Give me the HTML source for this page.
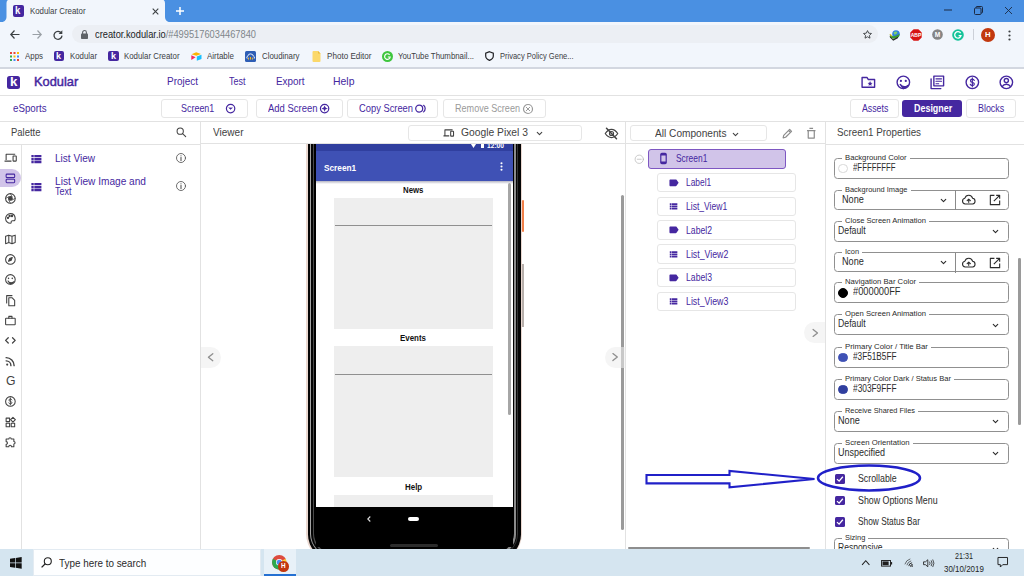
<!DOCTYPE html>
<html lang="en">
<head>
<meta charset="utf-8">
<title>Kodular Creator</title>
<style>
*{box-sizing:border-box;margin:0;padding:0}
html,body{width:1024px;height:576px;overflow:hidden;background:#fff}
body{position:relative;font-family:"Liberation Sans",sans-serif;color:#333;font-size:11px}
.a{position:absolute}
.t{position:absolute;white-space:nowrap;line-height:1;transform-origin:0 0}
svg{position:absolute;overflow:visible}
.btn{position:absolute;border:1px solid #e6e6e6;border-radius:3px;background:#fff}
.fs{position:absolute;border:1px solid #909090;border-radius:3.5px}
.lgbg{position:absolute;background:#fff;height:3px}
</style>
</head>
<body>
<div class="a" style="left:0px;top:0px;width:1024px;height:22px;background:#4a90e2;"></div>
<div class="a" style="left:0px;top:22px;width:1024px;height:46px;background:#f2f6fc;"></div>
<svg style="left:0px;top:0px" width="172" height="23" viewBox="0 0 172 23"><path d="M0 22.500C4 22.500 6.500 20 6.500 17V3Q6.500 -0.500 10 -0.500H161.500Q165 -0.500 165 3V17C165 20 167.500 22.500 171.500 22.500V23H0Z" fill="#f2f6fc"/></svg>
<div class="a" style="left:72px;top:25px;width:806px;height:18px;background:#eceff4;border-radius:9px"></div>
<div class="a" style="left:0px;top:67px;width:1024px;height:1.5px;background:#d3d7e0;"></div>
<div class="a" style="left:12.5px;top:5px;width:11.5px;height:11.5px;background:#4527a0;border-radius:2px"></div>
<div class="t" style="left:15.20px;top:5.41px;font-size:10.5px;color:#fff;transform:scaleX(0.9076);font-weight:bold;">k</div>
<div class="t" style="left:29.50px;top:6.98px;font-size:9px;color:#3c4043;transform:scaleX(0.8736);">Kodular Creator</div>
<svg style="left:151.5px;top:7.5px" width="7" height="7" viewBox="0 0 7 7"><path d="M0.7 0.7L6.3 6.3M6.3 0.7L0.7 6.3" stroke="#3c4043" stroke-width="1.1" fill="none"/></svg>
<svg style="left:176px;top:7px" width="8" height="8" viewBox="0 0 8 8"><path d="M4 0V8M0 4H8" stroke="#fff" stroke-width="1.5" fill="none"/></svg>
<svg style="left:944px;top:9px" width="8" height="2" viewBox="0 0 8 2"><path d="M0 1H8" stroke="#1b2a44" stroke-width="1"/></svg>
<svg style="left:973.5px;top:6px" width="9" height="9" viewBox="0 0 9 9"><rect x="0.5" y="2" width="6.5" height="6.5" rx="1" fill="none" stroke="#1b2a44" stroke-width="1"/><path d="M2 2V1.5Q2 0.5 3 0.5H7.5Q8.5 0.5 8.5 1.5V6Q8.5 7 7.5 7H7" fill="none" stroke="#1b2a44" stroke-width="1"/></svg>
<svg style="left:1005px;top:6.5px" width="7" height="7" viewBox="0 0 7 7"><path d="M0 0L7 7M7 0L0 7" stroke="#1b2a44" stroke-width="0.9" fill="none"/></svg>
<svg style="left:9.5px;top:30px" width="10" height="9" viewBox="0 0 10 9"><path d="M4.5 0.5L0.8 4.5L4.5 8.5M0.8 4.5H9.5" stroke="#3c4043" stroke-width="1.2" fill="none"/></svg>
<svg style="left:31.5px;top:30px" width="10" height="9" viewBox="0 0 10 9"><path d="M5.5 0.5L9.2 4.5L5.5 8.5M9.2 4.5H0.5" stroke="#9aa0a6" stroke-width="1.2" fill="none"/></svg>
<svg style="left:52.5px;top:29.5px" width="10" height="10" viewBox="0 0 10 10"><path d="M8.3 3A4 4 0 1 0 9 5.6" stroke="#3c4043" stroke-width="1.3" fill="none"/><path d="M9.3 0.3V4H5.6Z" fill="#3c4043"/></svg>
<svg style="left:80.5px;top:30px" width="7" height="9" viewBox="0 0 7 9"><rect x="0" y="3.6" width="7" height="5.4" rx="0.8" fill="#5f6368"/><path d="M1.6 4V2.4a1.9 1.9 0 0 1 3.8 0V4" stroke="#5f6368" stroke-width="1.1" fill="none"/></svg>
<div class="t" style="left:94.5px;top:29.11px;font-size:10.5px;color:#202124;transform:scaleX(0.8839)">creator.kodular.io<span style="color:#80868b">/#4995176034467840</span></div>
<svg style="left:862px;top:29px" width="11" height="11" viewBox="0 0 24 24"><path d="M12 3.5l2.6 5.6 6.1.7-4.5 4.2 1.2 6-5.4-3-5.4 3 1.2-6L3.3 9.8l6.1-.7z" fill="none" stroke="#3c4043" stroke-width="2" stroke-linejoin="round"/></svg>
<svg style="left:888.5px;top:28.5px" width="12" height="12" viewBox="0 0 12 12"><circle cx="7" cy="5" r="3.800" fill="#2f7fe0"/><path d="M4.500 3.500Q6.500 1.800 8.500 3Q8 5.500 5.500 5.800Z" fill="#7ed06a"/><path d="M0.800 5.200Q3.500 9.500 10.800 4.800L9.800 7.800Q4.500 11.500 1.200 8.200Z" fill="#3c9a2e"/><path d="M0.600 6.800L4 10.200L9.500 7.500L8.800 9.300L4.200 11.800L1 8.600Z" fill="#2a2a2a"/><path d="M1 5.200L2.800 7.200" stroke="#e8c030" stroke-width="1.200"/></svg>
<svg style="left:909.5px;top:28.5px" width="12" height="12" viewBox="0 0 12 12"><path d="M3.6 0.3H8.4L11.7 3.6V8.4L8.4 11.7H3.6L0.3 8.4V3.6Z" fill="#d61414"/><text x="6" y="7.9" font-family="Liberation Sans,sans-serif" font-size="5" font-weight="bold" fill="#fff" text-anchor="middle">ABP</text></svg>
<svg style="left:931.5px;top:29px" width="11" height="11" viewBox="0 0 12 12"><circle cx="6" cy="6" r="5.800" fill="#858585"/><text x="6" y="8.500" font-family="Liberation Sans,sans-serif" font-size="7.200" font-weight="bold" fill="#fff" text-anchor="middle">M</text></svg>
<svg style="left:952px;top:28.5px" width="12" height="12" viewBox="0 0 12 12"><circle cx="6" cy="6" r="5.8" fill="#15c39a"/><path d="M8.6 4.2A3.2 3.2 0 1 0 9 6.6H6.6" stroke="#fff" stroke-width="1.3" fill="none"/></svg>
<div class="a" style="left:972.5px;top:29px;width:1px;height:11px;background:#ccd0d8;"></div>
<div class="a" style="left:981px;top:27.5px;width:14px;height:14px;background:#c2380f;border-radius:7px"></div>
<div class="t" style="left:985.20px;top:30.63px;font-size:8px;color:#fff;transform:scaleX(0.9693);font-weight:bold;">H</div>
<svg style="left:1008px;top:29.5px" width="3" height="11" viewBox="0 0 3 11"><circle cx="1.5" cy="1.5" r="1.1" fill="#3c4043"/><circle cx="1.5" cy="5.5" r="1.1" fill="#3c4043"/><circle cx="1.5" cy="9.5" r="1.1" fill="#3c4043"/></svg>
<svg style="left:10px;top:51.5px" width="9" height="9" viewBox="0 0 9 9"><rect x="0" y="0" width="2" height="2" fill="#ea4335"/><rect x="3.5" y="0" width="2" height="2" fill="#ea4335"/><rect x="7" y="0" width="2" height="2" fill="#fbbc04"/><rect x="0" y="3.5" width="2" height="2" fill="#34a853"/><rect x="3.5" y="3.5" width="2" height="2" fill="#fbbc04"/><rect x="7" y="3.5" width="2" height="2" fill="#4285f4"/><rect x="0" y="7" width="2" height="2" fill="#34a853"/><rect x="3.5" y="7" width="2" height="2" fill="#4285f4"/><rect x="7" y="7" width="2" height="2" fill="#ea4335"/></svg>
<div class="t" style="left:25.00px;top:51.98px;font-size:9px;color:#3c4043;transform:scaleX(0.8775);">Apps</div>
<div class="a" style="left:53.5px;top:50.5px;width:10.5px;height:10.5px;background:#4527a0;border-radius:2px"></div>
<div class="t" style="left:56.00px;top:51.26px;font-size:9.5px;color:#fff;transform:scaleX(0.9463);font-weight:bold;">k</div>
<div class="t" style="left:70.00px;top:51.98px;font-size:9px;color:#3c4043;transform:scaleX(0.8704);">Kodular</div>
<div class="a" style="left:108px;top:50.5px;width:10.5px;height:10.5px;background:#4527a0;border-radius:2px"></div>
<div class="t" style="left:110.50px;top:51.26px;font-size:9.5px;color:#fff;transform:scaleX(0.9463);font-weight:bold;">k</div>
<div class="t" style="left:124.00px;top:51.98px;font-size:9px;color:#3c4043;transform:scaleX(0.8736);">Kodular Creator</div>
<svg style="left:191px;top:51.5px" width="11" height="9" viewBox="0 0 11 9"><path d="M0.5 2.2L5.2 0.3L10 2L5.3 3.8Z" fill="#fcb400"/><path d="M5.8 4.6L10.5 2.8V7L5.8 8.8Z" fill="#18bfff"/><path d="M0.3 3.2L4.6 5.2L0.3 8Z" fill="#f82b60"/></svg>
<div class="t" style="left:207.00px;top:51.98px;font-size:9px;color:#3c4043;transform:scaleX(0.8848);">Airtable</div>
<svg style="left:245px;top:50.5px" width="11" height="11" viewBox="0 0 11 11"><rect width="11" height="11" rx="1.500" fill="#2d5db5"/><path d="M2.200 7.600Q1 5.800 2.800 5Q3.300 2.700 5.700 2.900Q8 3.100 8.300 5Q10 5.400 9.200 7.600" fill="none" stroke="#fff" stroke-width="0.900"/><path d="M3.600 8.600V6.600M5.500 8.600V6M7.400 8.600V6.600" stroke="#f5b324" stroke-width="1"/></svg>
<div class="t" style="left:261.50px;top:51.98px;font-size:9px;color:#3c4043;transform:scaleX(0.8716);">Cloudinary</div>
<svg style="left:312px;top:50.5px" width="9" height="11" viewBox="0 0 9 11"><path d="M0.5 1Q0.5 0 1.5 0H6L8.5 2.5V10Q8.5 11 7.5 11H1.5Q0.5 11 0.5 10Z" fill="#fbd86a"/><path d="M6 0V2.5H8.5Z" fill="#e9b93a"/></svg>
<div class="t" style="left:326.50px;top:51.98px;font-size:9px;color:#3c4043;transform:scaleX(0.8984);">Photo Editor</div>
<svg style="left:381.5px;top:50.5px" width="11" height="11" viewBox="0 0 11 11"><circle cx="5.5" cy="5.5" r="5.5" fill="#3ec63e"/><path d="M7.6 3.8A2.8 2.8 0 1 0 8.2 6H5.8" stroke="#fff" stroke-width="1.2" fill="none"/></svg>
<div class="t" style="left:398.00px;top:51.98px;font-size:9px;color:#3c4043;transform:scaleX(0.8713);">YouTube Thumbnail...</div>
<svg style="left:485px;top:51px" width="9" height="10" viewBox="0 0 9 10"><path d="M4.5 0.7L8.3 2.2V5Q8.3 7.8 4.5 9.4Q0.7 7.8 0.7 5V2.2Z" fill="none" stroke="#202124" stroke-width="1.2"/></svg>
<div class="t" style="left:500.00px;top:51.98px;font-size:9px;color:#3c4043;transform:scaleX(0.8349);">Privacy Policy Gene...</div>
<div class="a" style="left:0px;top:95px;width:1024px;height:1px;background:#e2e2e2;"></div>
<div class="a" style="left:0px;top:121px;width:1024px;height:1px;background:#e2e2e2;"></div>
<div class="a" style="left:7px;top:76px;width:13px;height:13px;background:#4527a0;border-radius:2.5px"></div>
<div class="t" style="left:9.60px;top:76.22px;font-size:12.5px;color:#fff;transform:scaleX(1.0644);font-weight:bold;">k</div>
<div class="t" style="left:33.70px;top:76.06px;font-size:12.8px;color:#4527a0;transform:scaleX(1.0041);-webkit-text-stroke:0.45px #4527a0;">Kodular</div>
<div class="t" style="left:167.00px;top:76.31px;font-size:10.5px;color:#4527a0;transform:scaleX(0.9486);">Project</div>
<div class="t" style="left:229.00px;top:76.31px;font-size:10.5px;color:#4527a0;transform:scaleX(0.8568);">Test</div>
<div class="t" style="left:276.00px;top:76.31px;font-size:10.5px;color:#4527a0;transform:scaleX(0.9391);">Export</div>
<div class="t" style="left:332.50px;top:76.31px;font-size:10.5px;color:#4527a0;transform:scaleX(0.9956);">Help</div>
<svg style="left:859.65px;top:73.65px" width="16.7" height="16.7" viewBox="0 0 24 24"><g fill="none" stroke="#4527a0" stroke-width="2" stroke-linejoin="round" stroke-linecap="round"><path d="M3 6V19H21V8H12L10 5H3Z" stroke-linecap="butt"/><path d="M14.5 10.2l1.1 2.3 2.5.3-1.9 1.700.5 2.500-2.200-1.300-2.200 1.300.5-2.500-1.900-1.700 2.500-.3z" fill="#4527a0" stroke="none"/></g></svg>
<svg style="left:894.65px;top:73.65px" width="16.7" height="16.7" viewBox="0 0 24 24"><g fill="none" stroke="#4527a0" stroke-width="2" stroke-linejoin="round" stroke-linecap="round"><circle cx="12" cy="12" r="9"/><circle cx="8.500" cy="10" r="1.600" fill="#4527a0" stroke="none"/><circle cx="15.500" cy="10" r="1.600" fill="#4527a0" stroke="none"/><path d="M7.500 15Q12 21 18.500 16.500Q14 20.500 12 20.800Z" fill="#4527a0"/></g></svg>
<svg style="left:929.15px;top:73.65px" width="16.7" height="16.7" viewBox="0 0 24 24"><g fill="none" stroke="#4527a0" stroke-width="2" stroke-linejoin="round" stroke-linecap="round"><path d="M7 3H21V17H7Z"/><path d="M3 7V21H17"/><path d="M10 7H18M10 10.500H18M10 14H14" stroke-width="1.600"/></g></svg>
<svg style="left:963.65px;top:73.65px" width="16.7" height="16.7" viewBox="0 0 24 24"><g fill="none" stroke="#4527a0" stroke-width="2" stroke-linejoin="round" stroke-linecap="round"><circle cx="12" cy="12" r="9"/><path d="M14.800 9.200Q14 7.500 12 7.500Q9.300 7.500 9.300 9.600Q9.300 11.300 12 12Q14.900 12.700 14.900 14.500Q14.900 16.600 12 16.600Q9.700 16.600 9 14.800M12 5.500V18.500" stroke-width="1.700"/></g></svg>
<svg style="left:998.35px;top:73.65px" width="16.7" height="16.7" viewBox="0 0 24 24"><g fill="none" stroke="#4527a0" stroke-width="2" stroke-linejoin="round" stroke-linecap="round"><circle cx="12" cy="12" r="9"/><circle cx="12" cy="9.500" r="3"/><path d="M6 18Q8 14.800 12 14.800Q16 14.800 18 18"/></g></svg>
<div class="t" style="left:12.50px;top:102.71px;font-size:10.5px;color:#4527a0;transform:scaleX(0.9258);">eSports</div>
<div class="btn" style="left:160.50px;top:99.2px;width:87.50px;height:18.4px;"></div>
<div class="btn" style="left:255.50px;top:99.2px;width:87.00px;height:18.4px;"></div>
<div class="btn" style="left:347.00px;top:99.2px;width:91.00px;height:18.4px;"></div>
<div class="btn" style="left:443.25px;top:99.2px;width:102.25px;height:18.4px;"></div>
<div class="t" style="left:180.70px;top:102.81px;font-size:10.5px;color:#4527a0;transform:scaleX(0.8515);">Screen1</div>
<svg style="left:225.1px;top:103.10000000000001px" width="11.2" height="11.2" viewBox="0 0 24 24"><g fill="none" stroke="#4527a0" stroke-width="2.6" stroke-linejoin="round" stroke-linecap="round"><circle cx="12" cy="12" r="9"/><path d="M8.500 10.500L12 14L15.500 10.500Z" fill="#4527a0" stroke-width="1"/></g></svg>
<div class="t" style="left:267.50px;top:102.81px;font-size:10.5px;color:#4527a0;transform:scaleX(0.9021);">Add Screen</div>
<svg style="left:319.4px;top:103.10000000000001px" width="11.2" height="11.2" viewBox="0 0 24 24"><g fill="none" stroke="#4527a0" stroke-width="2.6" stroke-linejoin="round" stroke-linecap="round"><circle cx="12" cy="12" r="9"/><path d="M12 7V17M7 12H17" stroke-width="2"/><circle cx="12" cy="12" r="3.200" fill="#4527a0" stroke="none"/></g></svg>
<div class="t" style="left:359.00px;top:102.81px;font-size:10.5px;color:#4527a0;transform:scaleX(0.8896);">Copy Screen</div>
<svg style="left:414.9px;top:103.10000000000001px" width="11.2" height="11.2" viewBox="0 0 24 24"><g fill="none" stroke="#4527a0" stroke-width="2.6" stroke-linejoin="round" stroke-linecap="round"><circle cx="9" cy="12" r="7.500"/><path d="M18.500 5A9 9 0 0 1 18.500 19"/></g></svg>
<div class="t" style="left:455.00px;top:102.81px;font-size:10.5px;color:#9a9a9a;transform:scaleX(0.8634);">Remove Screen</div>
<svg style="left:521.7px;top:102.7px" width="12" height="12" viewBox="0 0 24 24"><g fill="none" stroke="#9a9a9a" stroke-width="2.4" stroke-linejoin="round" stroke-linecap="round"><circle cx="12" cy="12" r="9"/><path d="M8.500 8.500L15.500 15.500M15.500 8.500L8.500 15.500" stroke-width="2"/></g></svg>
<div class="btn" style="left:850.00px;top:99.2px;width:49.00px;height:18.4px;"></div>
<div class="btn" style="left:965.50px;top:99.2px;width:50.00px;height:18.4px;"></div>
<div class="a" style="left:902.3px;top:99.7px;width:59.5px;height:17.3px;background:#4527a0;border-radius:3px"></div>
<div class="t" style="left:861.70px;top:102.61px;font-size:10.5px;color:#4527a0;transform:scaleX(0.8346);">Assets</div>
<div class="t" style="left:913.50px;top:102.61px;font-size:10.5px;color:#fff;transform:scaleX(0.8502);font-weight:bold;">Designer</div>
<div class="t" style="left:977.50px;top:102.61px;font-size:10.5px;color:#4527a0;transform:scaleX(0.8472);">Blocks</div>
<div class="a" style="left:0px;top:143.8px;width:200px;height:1px;background:#e2e2e2;"></div>
<div class="a" style="left:200px;top:142.6px;width:425px;height:1px;background:#e2e2e2;"></div>
<div class="a" style="left:625px;top:143.2px;width:200px;height:1px;background:#e2e2e2;"></div>
<div class="a" style="left:825px;top:143.6px;width:199px;height:1px;background:#e2e2e2;"></div>
<div class="a" style="left:200px;top:122px;width:1px;height:427px;background:#e2e2e2;"></div>
<div class="a" style="left:625px;top:122px;width:1px;height:427px;background:#e2e2e2;"></div>
<div class="a" style="left:825.3px;top:122px;width:1px;height:427px;background:#e2e2e2;"></div>
<div class="t" style="left:10.50px;top:127.31px;font-size:10.5px;color:#424242;transform:scaleX(0.9024);">Palette</div>
<svg style="left:175.45px;top:126.44999999999999px" width="12.5" height="12.5" viewBox="0 0 24 24"><g fill="none" stroke="#424242" stroke-width="2" stroke-linejoin="round" stroke-linecap="round"><circle cx="10" cy="10" r="6"/><path d="M14.500 14.500L20.500 20.500" /></g></svg>
<div class="t" style="left:212.50px;top:126.91px;font-size:10.5px;color:#424242;transform:scaleX(0.9560);">Viewer</div>
<div class="btn" style="left:407.50px;top:124.5px;width:174.00px;height:16px;"></div>
<div class="t" style="left:461.00px;top:126.83px;font-size:11.3px;color:#424242;transform:scaleX(0.9116);">Google Pixel 3</div>
<svg style="left:443.25px;top:127.44999999999999px" width="11.5" height="11.5" viewBox="0 0 24 24"><g fill="none" stroke="#424242" stroke-width="2.2" stroke-linejoin="round" stroke-linecap="round"><path d="M4 17V6H20M1 18.500H13" stroke-linecap="butt"/><rect x="16" y="9" width="6" height="10" rx="0.800"/></g></svg>
<svg style="left:535.0px;top:128.8px" width="9" height="9" viewBox="0 0 24 24"><g fill="none" stroke="#424242" stroke-width="2.9" stroke-linejoin="round" stroke-linecap="round"><path d="M6 9L12 15L18 9" /></g></svg>
<svg style="left:604.2px;top:125.5px" width="15" height="15" viewBox="0 0 24 24"><g fill="none" stroke="#424242" stroke-width="1.9" stroke-linejoin="round" stroke-linecap="round"><path d="M2 12Q6.500 5.500 12 5.500Q17.500 5.500 22 12Q17.500 18.500 12 18.500Q6.500 18.500 2 12Z"/><circle cx="12" cy="12" r="3.200"/><path d="M4 3.500L20 20.500" stroke-width="2.400"/></g></svg>
<div class="btn" style="left:629.50px;top:125.2px;width:137.00px;height:16.3px;"></div>
<div class="t" style="left:654.50px;top:128.03px;font-size:11.3px;color:#424242;transform:scaleX(0.8963);">All Components</div>
<svg style="left:731.0px;top:129.8px" width="9" height="9" viewBox="0 0 24 24"><g fill="none" stroke="#424242" stroke-width="2.9" stroke-linejoin="round" stroke-linecap="round"><path d="M6 9L12 15L18 9" /></g></svg>
<svg style="left:780.5px;top:126.5px" width="13" height="13" viewBox="0 0 24 24"><g fill="none" stroke="#8c8c8c" stroke-width="2.2" stroke-linejoin="round" stroke-linecap="round"><path d="M4 20L5 15.500L16 4.500L19.500 8L8.500 19Z M14 6.500L17.500 10" /></g></svg>
<svg style="left:803.75px;top:125.94999999999999px" width="14.5" height="14.5" viewBox="0 0 24 24"><g fill="none" stroke="#8c8c8c" stroke-width="2" stroke-linejoin="round" stroke-linecap="round"><path d="M7 8V20H17V8M5 7.500H19M9 4H15" stroke-linecap="butt"/></g></svg>
<div class="t" style="left:837.00px;top:126.91px;font-size:10.5px;color:#424242;transform:scaleX(0.9346);">Screen1 Properties</div>
<div class="a" style="left:21px;top:144px;width:1px;height:405px;background:#e2e2e2;"></div>
<div class="a" style="left:0px;top:168.5px;width:21px;height:18.5px;background:#d1c4e9;border-radius:0 9px 9px 0"></div>
<svg style="left:4.299999999999999px;top:151.4px" width="12.8" height="12.8" viewBox="0 0 24 24"><g fill="none" stroke="#424242" stroke-width="2" stroke-linejoin="round" stroke-linecap="round"><path d="M4 17V6H21M1 19H14" stroke-linecap="butt"/><rect x="17" y="9.500" width="6" height="9.500" rx="0.500"/></g></svg>
<svg style="left:4.299999999999999px;top:171.73px" width="12.8" height="12.8" viewBox="0 0 24 24"><g fill="none" stroke="#4527a0" stroke-width="2" stroke-linejoin="round" stroke-linecap="round"><rect x="4" y="4" width="16" height="6.500" rx="1.500"/><rect x="4" y="13.500" width="16" height="6.500" rx="1.500"/></g></svg>
<svg style="left:4.299999999999999px;top:192.06px" width="12.8" height="12.8" viewBox="0 0 24 24"><g fill="none" stroke="#424242" stroke-width="2" stroke-linejoin="round" stroke-linecap="round"><circle cx="12" cy="12" r="9"/><circle cx="12" cy="12" r="3.500" fill="#424242"/><path d="M12 3L15 9M21 12L15 15M12 21L9 15M3 12L9 9" stroke-width="1.500"/></g></svg>
<svg style="left:4.299999999999999px;top:212.39000000000001px" width="12.8" height="12.8" viewBox="0 0 24 24"><g fill="none" stroke="#424242" stroke-width="2" stroke-linejoin="round" stroke-linecap="round"><path d="M12 3A9 9 0 1 0 12 21Q14 21 13.500 19Q13 16.500 16 16.500H18Q21 16.500 21 12Q20.500 3 12 3Z"/><circle cx="7.500" cy="11" r="1.200" fill="#424242"/><circle cx="10.500" cy="7.500" r="1.200" fill="#424242"/><circle cx="15" cy="7.500" r="1.200" fill="#424242"/></g></svg>
<svg style="left:4.299999999999999px;top:232.72px" width="12.8" height="12.8" viewBox="0 0 24 24"><g fill="none" stroke="#424242" stroke-width="2" stroke-linejoin="round" stroke-linecap="round"><path d="M3 6L9 4L15 6L21 4V18L15 20L9 18L3 20ZM9 4V18M15 6V20"/></g></svg>
<svg style="left:4.299999999999999px;top:253.04999999999998px" width="12.8" height="12.8" viewBox="0 0 24 24"><g fill="none" stroke="#424242" stroke-width="2" stroke-linejoin="round" stroke-linecap="round"><circle cx="12" cy="12" r="9"/><path d="M15.500 8.500L13.500 13.500L8.500 15.500L10.500 10.500Z" fill="#424242"/></g></svg>
<svg style="left:4.299999999999999px;top:273.38000000000005px" width="12.8" height="12.8" viewBox="0 0 24 24"><g fill="none" stroke="#424242" stroke-width="2" stroke-linejoin="round" stroke-linecap="round"><circle cx="12" cy="12" r="9"/><circle cx="8.500" cy="10" r="1.500" fill="#424242" stroke="none"/><circle cx="15.500" cy="10" r="1.500" fill="#424242" stroke="none"/><path d="M7.500 15Q12 21 18.500 16.500Q14 20.500 12 20.800Z" fill="#424242"/></g></svg>
<svg style="left:4.299999999999999px;top:293.71000000000004px" width="12.8" height="12.8" viewBox="0 0 24 24"><g fill="none" stroke="#424242" stroke-width="2" stroke-linejoin="round" stroke-linecap="round"><path d="M9 7H15L20 12V22H9Z"/><path d="M5 17V3H15"/></g></svg>
<svg style="left:4.299999999999999px;top:314.04px" width="12.8" height="12.8" viewBox="0 0 24 24"><g fill="none" stroke="#424242" stroke-width="2" stroke-linejoin="round" stroke-linecap="round"><rect x="3" y="8" width="18" height="12" rx="1"/><path d="M9 8V4.500H15V8"/></g></svg>
<svg style="left:4.299999999999999px;top:334.37px" width="12.8" height="12.8" viewBox="0 0 24 24"><g fill="none" stroke="#424242" stroke-width="2" stroke-linejoin="round" stroke-linecap="round"><path d="M8 7L3 12L8 17M16 7L21 12L16 17" stroke-width="2.400"/></g></svg>
<svg style="left:4.299999999999999px;top:354.7px" width="12.8" height="12.8" viewBox="0 0 24 24"><g fill="none" stroke="#424242" stroke-width="2" stroke-linejoin="round" stroke-linecap="round"><circle cx="6" cy="18" r="2" fill="#424242" stroke="none"/><path d="M4 11A9 9 0 0 1 13 20M4 5A15 15 0 0 1 19 20" stroke-width="2.600"/></g></svg>
<div class="t" style="left:6.00px;top:375.27px;font-size:12px;color:#424242;transform:scaleX(1.0178);">G</div>
<svg style="left:4.299999999999999px;top:395.36px" width="12.8" height="12.8" viewBox="0 0 24 24"><g fill="none" stroke="#424242" stroke-width="2" stroke-linejoin="round" stroke-linecap="round"><circle cx="12" cy="12" r="9"/><path d="M14.800 9.200Q14 7.500 12 7.500Q9.300 7.500 9.300 9.600Q9.300 11.300 12 12Q14.900 12.700 14.900 14.500Q14.900 16.600 12 16.600Q9.700 16.600 9 14.800M12 5.500V18.500" stroke-width="1.700"/></g></svg>
<svg style="left:4.299999999999999px;top:415.69px" width="12.8" height="12.8" viewBox="0 0 24 24"><g fill="none" stroke="#424242" stroke-width="2" stroke-linejoin="round" stroke-linecap="round"><rect x="4" y="4" width="6.500" height="6.500"/><rect x="4" y="13.500" width="6.500" height="6.500"/><rect x="13.500" y="13.500" width="6.500" height="6.500"/><path d="M16.800 2.500L21.300 7L16.800 11.500L12.300 7Z"/></g></svg>
<svg style="left:4.299999999999999px;top:436.02000000000004px" width="12.8" height="12.8" viewBox="0 0 24 24"><g fill="none" stroke="#424242" stroke-width="2" stroke-linejoin="round" stroke-linecap="round"><path d="M9 5.500A2.300 2.300 0 0 1 13.600 5.500H18.500V10.400A2.300 2.300 0 0 1 18.500 15V20H14A2.500 2.500 0 0 0 9 20H4V15.500A2.500 2.500 0 0 0 4 10.500V5.500Z"/></g></svg>
<svg style="left:29.1px;top:151.6px" width="14.2" height="14.2" viewBox="0 0 24 24"><path d="M4 14h4v-4H4v4zm0 5h4v-4H4v4zM4 9h4V5H4v4zm5 5h12v-4H9v4zm0 5h12v-4H9v4zM9 5v4h12V5H9z" fill="#4527a0"/></svg>
<svg style="left:29.1px;top:179.6px" width="14.2" height="14.2" viewBox="0 0 24 24"><path d="M4 14h4v-4H4v4zm0 5h4v-4H4v4zM4 9h4V5H4v4zm5 5h12v-4H9v4zm0 5h12v-4H9v4zM9 5v4h12V5H9z" fill="#4527a0"/></svg>
<div class="t" style="left:54.50px;top:153.11px;font-size:10.5px;color:#4527a0;transform:scaleX(0.9563);">List View</div>
<div class="t" style="left:54.50px;top:176.11px;font-size:10.5px;color:#4527a0;transform:scaleX(0.9644);">List View Image and</div>
<div class="t" style="left:54.50px;top:185.81px;font-size:10.5px;color:#4527a0;transform:scaleX(0.8568);">Text</div>
<svg style="left:175.0px;top:152.4px" width="12" height="12" viewBox="0 0 24 24"><g fill="none" stroke="#555" stroke-width="1.7" stroke-linejoin="round" stroke-linecap="round"><circle cx="12" cy="12" r="9"/><path d="M12 11V17" stroke-width="2.200"/><circle cx="12" cy="7.600" r="1.200" fill="#555" stroke="none"/></g></svg>
<svg style="left:175.0px;top:180.4px" width="12" height="12" viewBox="0 0 24 24"><g fill="none" stroke="#555" stroke-width="1.7" stroke-linejoin="round" stroke-linecap="round"><circle cx="12" cy="12" r="9"/><path d="M12 11V17" stroke-width="2.200"/><circle cx="12" cy="7.600" r="1.200" fill="#555" stroke="none"/></g></svg>
<div class="a" style="left:200.7px;top:346.5px;width:20.700000000000017px;height:21.2px;background:#f5f5f5;border-radius:0 10.6px 10.6px 0"></div>
<svg style="left:0px;top:0px" width="1024" height="576" viewBox="0 0 1024 576"><path d="M212.8 353.7L208.4 357.2L212.8 360.7" fill="none" stroke="#8e8e8e" stroke-width="1.300" stroke-linecap="round" stroke-linejoin="round"/></svg>
<div class="a" style="left:300px;top:144px;width:230px;height:405px;overflow:hidden">
<div class="a" style="left:6px;top:-44px;width:216px;height:461px;background:#ead8d0;border-radius:27px"></div>
<div class="a" style="left:7.5px;top:-44px;width:213px;height:459.5px;background:#050505;border-radius:25.500px"></div>
<div class="a" style="left:9.699999999999989px;top:-44px;width:208.6px;height:457.3px;background:linear-gradient(90deg,#a6a6a6 50%,#333 50%);border-radius:23.300px"></div>
<div class="a" style="left:11px;top:-44px;width:206px;height:456px;background:#050505;border-radius:22px"></div>
<div class="a" style="left:12.5px;top:-44px;width:203px;height:454.5px;background:linear-gradient(90deg,#4a4a4a 50%,#8c8c8c 50%);border-radius:20.500px"></div>
<div class="a" style="left:13.600000000000023px;top:-44px;width:200.8px;height:453.4px;background:#000;border-radius:19.400px"></div>
<div class="a" style="left:222px;top:56px;width:2px;height:32px;background:#f0804a;border-radius:1px"></div>
<div class="a" style="left:222px;top:120px;width:1.5px;height:63px;background:#b8b0ac;"></div>
<div class="a" style="left:16px;top:0px;width:197px;height:7px;background:#303f9f;"></div>
<div class="a" style="left:16px;top:7px;width:197px;height:29.7px;background:#3f51b5;"></div>
<div class="a" style="left:16px;top:36.69999999999999px;width:197px;height:326px;background:#fff;"></div>
<div class="a" style="left:16px;top:36.69999999999999px;width:197px;height:3px;background:linear-gradient(#b4b4c2,#fff);"></div>
<svg style="left:170px;top:-4px" width="7" height="8" viewBox="0 0 7 8"><path d="M0 2.500L3.500 8L7 2.500Z" fill="#fff"/></svg>
<div class="a" style="left:180.5px;top:-6px;width:3.5px;height:10px;background:#fff;"></div>
<div class="t" style="left:187.00px;top:-2.05px;font-size:7.5px;color:#fff;transform:scaleX(0.8862);font-weight:bold;">12:00</div>
<div class="t" style="left:23.50px;top:19.07px;font-size:9.6px;color:#fff;transform:scaleX(0.8619);font-weight:bold;">Screen1</div>
<svg style="left:199.7px;top:18px" width="3" height="9" viewBox="0 0 3 9"><circle cx="1.500" cy="1.200" r="1.050" fill="#fff"/><circle cx="1.500" cy="4.500" r="1.050" fill="#fff"/><circle cx="1.500" cy="7.800" r="1.050" fill="#fff"/></svg>
<div class="t" style="left:102.50px;top:41.57px;font-size:8.3px;color:#111;transform:scaleX(0.9409);font-weight:bold;">News</div>
<div class="a" style="left:34px;top:53.5px;width:159px;height:131px;background:#eeeeee;"></div>
<div class="a" style="left:35px;top:81px;width:157px;height:1px;background:#8f8f8f;"></div>
<div class="t" style="left:99.70px;top:189.77px;font-size:8.3px;color:#111;transform:scaleX(0.9552);font-weight:bold;">Events</div>
<div class="a" style="left:34px;top:202px;width:159px;height:131px;background:#eeeeee;"></div>
<div class="a" style="left:35px;top:229.5px;width:157px;height:1px;background:#8f8f8f;"></div>
<div class="t" style="left:104.50px;top:338.57px;font-size:8.3px;color:#111;transform:scaleX(0.9563);font-weight:bold;">Help</div>
<div class="a" style="left:34px;top:351px;width:159px;height:12px;background:#eeeeee;"></div>
<div class="a" style="left:208px;top:39px;width:3.2px;height:232px;background:#a6a6a6;border-radius:1.600px"></div>
<div class="a" style="left:16px;top:362.5px;width:197px;height:40px;background:#000;"></div>
<svg style="left:66.5px;top:372px" width="4" height="6" viewBox="0 0 4 6"><path d="M3.300 0.500L0.800 3L3.300 5.500" stroke="#ddd" stroke-width="1.100" fill="none"/></svg>
<div class="a" style="left:108px;top:372.5px;width:10.5px;height:4.5px;background:#fff;border-radius:2.250px"></div>
<div class="a" style="left:90px;top:399.5px;width:48px;height:3.5px;background:#2c2c2c;border-radius:1.750px"></div>
</div>
<div class="a" style="left:621px;top:194.5px;width:3.1px;height:335.5px;background:#9a9a9a;border-radius:1.5px"></div>
<div class="a" style="left:628px;top:546.7px;width:182px;height:2.6px;background:#8e8e8e;border-radius:1.3px"></div>
<svg style="left:633.65px;top:153.55px" width="10.5" height="10.5" viewBox="0 0 24 24"><g fill="none" stroke="#b0b0b0" stroke-width="1.5" stroke-linejoin="round" stroke-linecap="round"><circle cx="12" cy="12" r="9.500"/><path d="M7.500 12H16.500"/></g></svg>
<div class="a" style="left:648px;top:148.600px;width:138px;height:20px;background:#d1c4e9;border:1px solid #7e57c2;border-radius:3px"></div>
<svg style="left:657.0px;top:152.1px" width="13" height="13" viewBox="0 0 24 24"><g fill="none" stroke="#4527a0" stroke-width="2.2" stroke-linejoin="round" stroke-linecap="round"><rect x="7" y="2.500" width="10" height="19" rx="2"/><path d="M7 5H17M7 19H17" stroke-width="3" stroke-linecap="butt"/></g></svg>
<div class="t" style="left:675.70px;top:153.31px;font-size:10.5px;color:#4527a0;transform:scaleX(0.8003);">Screen1</div>
<div class="btn" style="left:656.80px;top:172.7px;width:139.30px;height:19.5px;"></div>
<svg style="left:667.7px;top:176.64999999999998px" width="11.6" height="11.6" viewBox="0 0 24 24"><path d="M17.630 5.840C17.270 5.330 16.670 5 16 5L5 5.010C3.900 5.010 3 5.900 3 7v10c0 1.100.900 1.990 2 1.990L16 19c.670 0 1.270-.330 1.630-.840L22 12l-4.370-6.160z" fill="#4527a0"/></svg>
<div class="t" style="left:685.70px;top:177.16px;font-size:10.5px;color:#4527a0;transform:scaleX(0.7992);">Label1</div>
<div class="btn" style="left:656.80px;top:196.52px;width:139.30px;height:19.5px;"></div>
<svg style="left:668.15px;top:200.92px" width="10.7" height="10.7" viewBox="0 0 24 24"><path d="M4 14h4v-4H4v4zm0 5h4v-4H4v4zM4 9h4V5H4v4zm5 5h12v-4H9v4zm0 5h12v-4H9v4zM9 5v4h12V5H9z" fill="#4527a0"/></svg>
<div class="t" style="left:685.70px;top:200.98px;font-size:10.5px;color:#4527a0;transform:scaleX(0.8144);">List_View1</div>
<div class="btn" style="left:656.80px;top:220.34px;width:139.30px;height:19.5px;"></div>
<svg style="left:667.7px;top:224.28999999999996px" width="11.6" height="11.6" viewBox="0 0 24 24"><path d="M17.630 5.840C17.270 5.330 16.670 5 16 5L5 5.010C3.900 5.010 3 5.900 3 7v10c0 1.100.900 1.990 2 1.990L16 19c.670 0 1.270-.330 1.630-.840L22 12l-4.370-6.160z" fill="#4527a0"/></svg>
<div class="t" style="left:685.70px;top:224.80px;font-size:10.5px;color:#4527a0;transform:scaleX(0.8246);">Label2</div>
<div class="btn" style="left:656.80px;top:244.16px;width:139.30px;height:19.5px;"></div>
<svg style="left:668.15px;top:248.56px" width="10.7" height="10.7" viewBox="0 0 24 24"><path d="M4 14h4v-4H4v4zm0 5h4v-4H4v4zM4 9h4V5H4v4zm5 5h12v-4H9v4zm0 5h12v-4H9v4zM9 5v4h12V5H9z" fill="#4527a0"/></svg>
<div class="t" style="left:685.70px;top:248.62px;font-size:10.5px;color:#4527a0;transform:scaleX(0.8362);">List_View2</div>
<div class="btn" style="left:656.80px;top:267.98px;width:139.30px;height:19.5px;"></div>
<svg style="left:667.7px;top:271.93px" width="11.6" height="11.6" viewBox="0 0 24 24"><path d="M17.630 5.840C17.270 5.330 16.670 5 16 5L5 5.010C3.900 5.010 3 5.900 3 7v10c0 1.100.900 1.990 2 1.990L16 19c.670 0 1.270-.330 1.630-.840L22 12l-4.370-6.160z" fill="#4527a0"/></svg>
<div class="t" style="left:685.70px;top:272.44px;font-size:10.5px;color:#4527a0;transform:scaleX(0.8246);">Label3</div>
<div class="btn" style="left:656.80px;top:291.8px;width:139.30px;height:19.5px;"></div>
<svg style="left:668.15px;top:296.19999999999993px" width="10.7" height="10.7" viewBox="0 0 24 24"><path d="M4 14h4v-4H4v4zm0 5h4v-4H4v4zM4 9h4V5H4v4zm5 5h12v-4H9v4zm0 5h12v-4H9v4zM9 5v4h12V5H9z" fill="#4527a0"/></svg>
<div class="t" style="left:685.70px;top:296.26px;font-size:10.5px;color:#4527a0;transform:scaleX(0.8362);">List_View3</div>
<div class="a" style="left:604.6px;top:346.7px;width:20.399999999999977px;height:21.2px;background:rgba(237,237,237,0.554);border-radius:10.6px 0 0 10.6px"></div>
<svg style="left:0px;top:0px" width="1024" height="576" viewBox="0 0 1024 576"><path d="M612.9 353.6L617.3 357.1L612.9 360.6" fill="none" stroke="#8e8e8e" stroke-width="1.300" stroke-linecap="round" stroke-linejoin="round"/></svg>
<div class="a" style="left:804.3px;top:322.0px;width:21.0px;height:21.2px;background:#f5f5f5;border-radius:10.6px 0 0 10.6px"></div>
<svg style="left:0px;top:0px" width="1024" height="576" viewBox="0 0 1024 576"><path d="M813.1 329.4L817.5 332.9L813.1 336.4" fill="none" stroke="#8e8e8e" stroke-width="1.300" stroke-linecap="round" stroke-linejoin="round"/></svg>
<div class="a" style="left:1018.3px;top:258px;width:2.7px;height:167px;background:#9a9a9a;border-radius:1.350px"></div>
<div class="fs" style="left:834.200px;top:157.70px;width:174.800px;height:21.2px"></div>
<div class="lgbg" style="left:841.500px;top:156.70px;width:68.1px"></div>
<div class="t" style="left:844.80px;top:153.70px;font-size:7.8px;color:#2b2b2b;transform:scaleX(0.9866);">Background Color</div>
<div class="a" style="left:838.400px;top:163.80px;width:9.600px;height:9.600px;border-radius:5px;background:#fff;border:1px solid #d8d8d8"></div>
<div class="t" style="left:852.50px;top:162.83px;font-size:10px;color:#2b2b2b;transform:scaleX(0.7827);">#FFFFFFFF</div>
<div class="fs" style="left:834.200px;top:189.70px;width:174.800px;height:20.2px"></div>
<div class="lgbg" style="left:841.500px;top:188.70px;width:69.0px"></div>
<div class="t" style="left:844.80px;top:185.70px;font-size:7.8px;color:#2b2b2b;transform:scaleX(0.9546);">Background Image</div>
<div class="t" style="left:841.60px;top:194.83px;font-size:10px;color:#2b2b2b;transform:scaleX(0.9119);">None</div>
<svg style="left:938.7px;top:195.89999999999998px" width="9" height="9" viewBox="0 0 24 24"><g fill="none" stroke="#2b2b2b" stroke-width="2.9" stroke-linejoin="round" stroke-linecap="round"><path d="M6 9L12 15L18 9" /></g></svg>
<div class="a" style="left:955.3px;top:190.2px;width:1px;height:20px;background:#8a8a8a;"></div>
<svg style="left:961.25px;top:192.45px" width="15.5" height="15.5" viewBox="0 0 24 24"><g fill="none" stroke="#2b2b2b" stroke-width="1.7" stroke-linejoin="round" stroke-linecap="round"><path d="M6.500 18.500A4.500 4.500 0 0 1 6 9.600A6.200 6.200 0 0 1 18 9.800A4.400 4.400 0 0 1 18 18.500Z"/><path d="M12 16V11.500M9.500 13.500L12 11L14.500 13.500" stroke-width="1.700"/></g></svg>
<svg style="left:988.4px;top:193.2px" width="14" height="14" viewBox="0 0 24 24"><g fill="none" stroke="#2b2b2b" stroke-width="1.9" stroke-linejoin="round" stroke-linecap="round"><path d="M11 4H4V20H20V13M14 4H20V10M20 4L10 14" stroke-linecap="butt"/></g></svg>
<div class="fs" style="left:834.200px;top:220.60px;width:174.800px;height:21.2px"></div>
<div class="lgbg" style="left:841.500px;top:219.60px;width:87.5px"></div>
<div class="t" style="left:844.80px;top:216.60px;font-size:7.8px;color:#2b2b2b;transform:scaleX(0.9730);">Close Screen Animation</div>
<div class="t" style="left:838.00px;top:225.73px;font-size:10px;color:#2b2b2b;transform:scaleX(0.8711);">Default</div>
<svg style="left:991.1px;top:227.0px" width="9" height="9" viewBox="0 0 24 24"><g fill="none" stroke="#2b2b2b" stroke-width="2.9" stroke-linejoin="round" stroke-linecap="round"><path d="M6 9L12 15L18 9" /></g></svg>
<div class="fs" style="left:834.200px;top:252.00px;width:174.800px;height:20.2px"></div>
<div class="lgbg" style="left:841.500px;top:251.00px;width:20.5px"></div>
<div class="t" style="left:844.80px;top:248.00px;font-size:7.8px;color:#2b2b2b;transform:scaleX(0.9496);">Icon</div>
<div class="t" style="left:841.60px;top:257.14px;font-size:10px;color:#2b2b2b;transform:scaleX(0.9119);">None</div>
<svg style="left:938.7px;top:258.2px" width="9" height="9" viewBox="0 0 24 24"><g fill="none" stroke="#2b2b2b" stroke-width="2.9" stroke-linejoin="round" stroke-linecap="round"><path d="M6 9L12 15L18 9" /></g></svg>
<div class="a" style="left:955.3px;top:252.5px;width:1px;height:20px;background:#8a8a8a;"></div>
<svg style="left:961.25px;top:254.75px" width="15.5" height="15.5" viewBox="0 0 24 24"><g fill="none" stroke="#2b2b2b" stroke-width="1.7" stroke-linejoin="round" stroke-linecap="round"><path d="M6.500 18.500A4.500 4.500 0 0 1 6 9.600A6.200 6.200 0 0 1 18 9.800A4.400 4.400 0 0 1 18 18.500Z"/><path d="M12 16V11.500M9.500 13.500L12 11L14.500 13.500" stroke-width="1.700"/></g></svg>
<svg style="left:988.4px;top:255.5px" width="14" height="14" viewBox="0 0 24 24"><g fill="none" stroke="#2b2b2b" stroke-width="1.9" stroke-linejoin="round" stroke-linecap="round"><path d="M11 4H4V20H20V13M14 4H20V10M20 4L10 14" stroke-linecap="butt"/></g></svg>
<div class="fs" style="left:834.200px;top:282.30px;width:174.800px;height:21.2px"></div>
<div class="lgbg" style="left:841.500px;top:281.30px;width:77.5px"></div>
<div class="t" style="left:844.80px;top:278.30px;font-size:7.8px;color:#2b2b2b;transform:scaleX(0.9866);">Navigation Bar Color</div>
<div class="a" style="left:838.400px;top:288.40px;width:9.600px;height:9.600px;border-radius:5px;background:#000;border:1px solid #000"></div>
<div class="t" style="left:852.50px;top:287.44px;font-size:10px;color:#2b2b2b;transform:scaleX(0.9287);">#000000FF</div>
<div class="fs" style="left:834.200px;top:314.30px;width:174.800px;height:21.2px"></div>
<div class="lgbg" style="left:841.500px;top:313.30px;width:87.5px"></div>
<div class="t" style="left:844.80px;top:310.30px;font-size:7.8px;color:#2b2b2b;transform:scaleX(0.9832);">Open Screen Animation</div>
<div class="t" style="left:838.00px;top:319.44px;font-size:10px;color:#2b2b2b;transform:scaleX(0.8711);">Default</div>
<svg style="left:991.1px;top:320.7px" width="9" height="9" viewBox="0 0 24 24"><g fill="none" stroke="#2b2b2b" stroke-width="2.9" stroke-linejoin="round" stroke-linecap="round"><path d="M6 9L12 15L18 9" /></g></svg>
<div class="fs" style="left:834.200px;top:346.80px;width:174.800px;height:21.2px"></div>
<div class="lgbg" style="left:841.500px;top:345.80px;width:89.5px"></div>
<div class="t" style="left:844.80px;top:342.80px;font-size:7.8px;color:#2b2b2b;transform:scaleX(1.0026);">Primary Color / Title Bar</div>
<div class="a" style="left:838.400px;top:352.90px;width:9.600px;height:9.600px;border-radius:5px;background:#3f51b5;border:1px solid #3f51b5"></div>
<div class="t" style="left:852.50px;top:351.94px;font-size:10px;color:#2b2b2b;transform:scaleX(0.8238);">#3F51B5FF</div>
<div class="fs" style="left:834.200px;top:378.70px;width:174.800px;height:21.2px"></div>
<div class="lgbg" style="left:841.500px;top:377.70px;width:112.5px"></div>
<div class="t" style="left:844.80px;top:374.70px;font-size:7.8px;color:#2b2b2b;transform:scaleX(0.9705);">Primary Color Dark / Status Bar</div>
<div class="a" style="left:838.400px;top:384.80px;width:9.600px;height:9.600px;border-radius:5px;background:#303f9f;border:1px solid #303f9f"></div>
<div class="t" style="left:852.50px;top:383.84px;font-size:10px;color:#2b2b2b;transform:scaleX(0.8327);">#303F9FFF</div>
<div class="fs" style="left:834.200px;top:410.70px;width:174.800px;height:21.2px"></div>
<div class="lgbg" style="left:841.500px;top:409.70px;width:76.5px"></div>
<div class="t" style="left:844.80px;top:406.70px;font-size:7.8px;color:#2b2b2b;transform:scaleX(0.9442);">Receive Shared Files</div>
<div class="t" style="left:838.00px;top:415.84px;font-size:10px;color:#2b2b2b;transform:scaleX(0.9119);">None</div>
<svg style="left:991.1px;top:417.09999999999997px" width="9" height="9" viewBox="0 0 24 24"><g fill="none" stroke="#2b2b2b" stroke-width="2.9" stroke-linejoin="round" stroke-linecap="round"><path d="M6 9L12 15L18 9" /></g></svg>
<div class="fs" style="left:834.200px;top:442.60px;width:174.800px;height:21.2px"></div>
<div class="lgbg" style="left:841.500px;top:441.60px;width:71.0px"></div>
<div class="t" style="left:844.80px;top:438.60px;font-size:7.8px;color:#2b2b2b;transform:scaleX(0.9918);">Screen Orientation</div>
<div class="t" style="left:838.00px;top:447.74px;font-size:10px;color:#2b2b2b;transform:scaleX(0.8995);">Unspecified</div>
<svg style="left:991.1px;top:449.0px" width="9" height="9" viewBox="0 0 24 24"><g fill="none" stroke="#2b2b2b" stroke-width="2.9" stroke-linejoin="round" stroke-linecap="round"><path d="M6 9L12 15L18 9" /></g></svg>
<div class="a" style="left:835px;top:474.2px;width:9.8px;height:9.8px;background:#4527a0;border-radius:1.500px"></div>
<svg style="left:835px;top:474.2px" width="9.8" height="9.8" viewBox="0 0 10 10"><path d="M2 5.200L4.200 7.300L8 2.800" stroke="#fff" stroke-width="1.300" fill="none"/></svg>
<div class="t" style="left:857.70px;top:474.47px;font-size:10.2px;color:#2b2b2b;transform:scaleX(0.8640);">Scrollable</div>
<div class="a" style="left:835px;top:495.59999999999997px;width:9.8px;height:9.8px;background:#4527a0;border-radius:1.500px"></div>
<svg style="left:835px;top:495.59999999999997px" width="9.8" height="9.8" viewBox="0 0 10 10"><path d="M2 5.200L4.200 7.300L8 2.800" stroke="#fff" stroke-width="1.300" fill="none"/></svg>
<div class="t" style="left:857.70px;top:495.87px;font-size:10.2px;color:#2b2b2b;transform:scaleX(0.8677);">Show Options Menu</div>
<div class="a" style="left:835px;top:516.8000000000001px;width:9.8px;height:9.8px;background:#4527a0;border-radius:1.500px"></div>
<svg style="left:835px;top:516.8000000000001px" width="9.8" height="9.8" viewBox="0 0 10 10"><path d="M2 5.200L4.200 7.300L8 2.800" stroke="#fff" stroke-width="1.300" fill="none"/></svg>
<div class="t" style="left:857.70px;top:517.07px;font-size:10.2px;color:#2b2b2b;transform:scaleX(0.8174);">Show Status Bar</div>
<div class="fs" style="left:834.200px;top:538.30px;width:174.800px;height:21px"></div>
<div class="lgbg" style="left:841.500px;top:537.30px;width:26.8px"></div>
<div class="t" style="left:844.80px;top:534.30px;font-size:7.8px;color:#2b2b2b;transform:scaleX(0.9555);">Sizing</div>
<div class="t" style="left:838.00px;top:543.33px;font-size:10px;color:#2b2b2b;transform:scaleX(0.8517);">Responsive</div>
<svg style="left:991.1px;top:544.7px" width="9" height="9" viewBox="0 0 24 24"><g fill="none" stroke="#2b2b2b" stroke-width="2.9" stroke-linejoin="round" stroke-linecap="round"><path d="M6 9L12 15L18 9" /></g></svg>
<svg style="left:0;top:0" width="1024" height="576" viewBox="0 0 1024 576"><g fill="none" stroke="#2020c8" stroke-width="2.100" stroke-linejoin="miter"><path d="M646.500 475H729.500V471L814.500 479L729.500 487.300V483.400H646.500Z"/><ellipse cx="869" cy="478" rx="51" ry="12.400" stroke-width="2.500"/></g></svg>
<div class="a" style="left:0px;top:549px;width:1024px;height:27px;background:#d5e5f0;"></div>
<div class="a" style="left:32.5px;top:549.3px;width:228.5px;height:26.7px;background:#fdfeff;border:1px solid #e3ebf2"></div>
<svg style="left:10.3px;top:557px" width="11.7" height="11.7" viewBox="0 0 12 12"><path d="M0 1.700L5.200 1V5.600H0ZM5.900 0.900L12 0V5.600H5.900ZM0 6.300H5.200V11L0 10.300ZM5.900 6.300H12V12L5.900 11.100Z" fill="#111"/></svg>
<svg style="left:40.5px;top:556.5px" width="11" height="11" viewBox="0 0 11 11"><circle cx="6.800" cy="4.200" r="3.500" fill="none" stroke="#222" stroke-width="1.100"/><path d="M4.300 6.700L0.600 10.400" stroke="#222" stroke-width="1.300"/></svg>
<div class="t" style="left:58.70px;top:557.71px;font-size:10.5px;color:#2a2a2a;transform:scaleX(0.9407);">Type here to search</div>
<div class="a" style="left:263.5px;top:549px;width:32.5px;height:27px;background:#e8f1f8;"></div>
<div class="a" style="left:263.5px;top:574px;width:32.5px;height:2px;background:#2470d2;"></div>
<svg style="left:271.8px;top:554.8px" width="14.5" height="14.5" viewBox="0 0 13 13"><circle cx="6.500" cy="6.500" r="6.500" fill="#dd4b3e"/><path d="M6.500 6.500L0.900 3.300A6.500 6.500 0 0 0 6.500 13Z" fill="#2da94f"/><path d="M6.500 6.500L6.500 13A6.500 6.500 0 0 0 12.100 3.300Z" fill="#fdd231"/><circle cx="6.500" cy="6.500" r="2.900" fill="#fff"/><circle cx="6.500" cy="6.500" r="2.300" fill="#4a8af4"/></svg>
<div class="a" style="left:278.2px;top:561px;width:10.5px;height:10.5px;background:#c2380f;border-radius:5.250px"></div>
<div class="t" style="left:281.20px;top:563.30px;font-size:6.5px;color:#fff;transform:scaleX(0.9799);font-weight:bold;">H</div>
<svg style="left:860.5px;top:560.2px" width="9.5" height="5.5" viewBox="0 0 9 6"><path d="M0.500 5.300L4.500 0.800L8.500 5.300" fill="none" stroke="#1f1f1f" stroke-width="1.100"/></svg>
<svg style="left:881px;top:559.7px" width="11.5" height="6.6" viewBox="0 0 12 7"><rect x="0.500" y="0.500" width="9.500" height="6" fill="none" stroke="#1f1f1f" stroke-width="1"/><rect x="1.500" y="1.500" width="6.500" height="4" fill="#1f1f1f"/><rect x="10.500" y="2.200" width="1.200" height="2.600" fill="#1f1f1f"/></svg>
<svg style="left:903.5px;top:558.3px" width="9" height="9" viewBox="0 0 10 10"><g fill="none" stroke="#1f1f1f"><path d="M1 7A8.800 8.800 0 0 1 7 1" stroke-width="1" opacity=".7"/><path d="M3.200 8A6.500 6.500 0 0 1 8 3.200" stroke-width="1" opacity=".7"/><path d="M5.300 9A4.200 4.200 0 0 1 9 5.300" stroke-width="1"/><path d="M7.300 9.600A2 2 0 0 1 9.600 7.300" stroke-width="1.100"/></g><circle cx="9" cy="9" r="0.900" fill="#1f1f1f"/></svg>
<svg style="left:923.4px;top:558.5px" width="11.5" height="8.5" viewBox="0 0 12 9"><path d="M0.500 3H2.500L5 0.800V8.200L2.500 6H0.500Z" fill="none" stroke="#1f1f1f" stroke-width="0.900"/><path d="M6.800 2.800Q8 4.500 6.800 6.200M8.500 1.500Q10.500 4.500 8.500 7.500M10.200 0.500Q12.800 4.500 10.200 8.500" fill="none" stroke="#1f1f1f" stroke-width="0.800"/></svg>
<div class="t" style="left:954.80px;top:552.42px;font-size:8.6px;color:#1f1f1f;transform:scaleX(0.8317);">21:31</div>
<div class="t" style="left:944.30px;top:564.62px;font-size:8.6px;color:#1f1f1f;transform:scaleX(0.9270);">30/10/2019</div>
<svg style="left:996.5px;top:557.3px" width="11.5" height="10.5" viewBox="0 0 11 11"><path d="M0.500 0.500H10.500V8H5.500L3 10.500V8H0.500Z" fill="none" stroke="#1f1f1f" stroke-width="1"/></svg>
</body>
</html>
